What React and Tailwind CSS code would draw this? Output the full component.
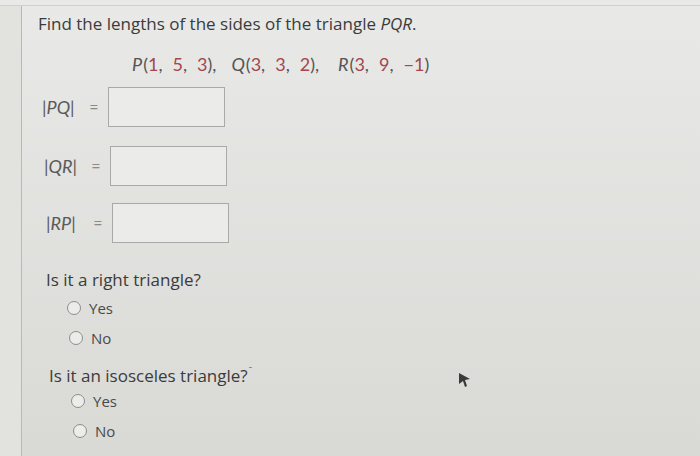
const sans = { fontFamily: '"Open Sans", "DejaVu Sans", sans-serif' };

const Num = ({ children }) => <span className="text-[#a4464f]">{children}</span>;

const Sep = () => (
  <>
    ,<span className="inline-block w-[10px]" />
  </>
);

const Point = ({ name, a, b, c, last }) => (
  <span className={`whitespace-nowrap ${last ? "ml-[4px]" : ""}`}>
    <i>{name}</i>
    <span className="ml-[1px]">(</span>
    <Num>{a}</Num>
    <Sep />
    <Num>{b}</Num>
    <Sep />
    <Num>{c}</Num>){last ? "" : ","}
  </span>
);

const Row = ({ left, label, mt }) => (
  <div className={`flex items-center h-[40px] ${left} ${mt}`}>
    <div className="w-[40px] text-[18px] text-[#5a5a5a] font-['Lato',sans-serif]">
      |<i>{label}</i>|
    </div>
    <div className="w-[24px] text-center text-[16px] text-[#8a8a8a] font-['Lato',sans-serif]">=</div>
    <div className="ml-[2px] w-[117px] h-[40px] border border-[#a9a9a7] bg-[#ebebe9]" />
  </div>
);

const Radio = ({ text, left, mt }) => (
  <div className={`flex items-center h-[24px] ${left} ${mt}`}>
    <span className="w-[14px] h-[14px] rounded-full border border-[#8d8d8b] bg-[#ececea]" />
    <span className="ml-[8px] text-[15px] text-[#4a4a4a]">{text}</span>
  </div>
);

export default function App() {
  return (
    <div
      className="relative w-[700px] h-[456px] overflow-hidden bg-gradient-to-b from-[#e9e9e7] to-[#d9d9d6] text-[#3b3b3b]"
      style={sans}
    >
      <div className="h-[5px]" />
      <div className="flex h-full border-t border-[#d0d0ce]">
        <div className="w-[21px] shrink-0 bg-[#e2e2df]" />
        <div className="flex-1 border-l border-[#b8b8b5] flex flex-col">
          <div className="mt-[6px] ml-[16px] h-[24px] leading-[24px] text-[17px]">
            Find the lengths of the sides of the triangle <i>PQR</i>.
          </div>
          <div className="mt-[16px] ml-[110px] h-[24px] leading-[24px] text-[18px] text-[#555] font-['Lato',sans-serif] flex gap-[15px]">
            <Point name="P" a="1" b="5" c="3" />
            <Point name="Q" a="3" b="3" c="2" />
            <Point name="R" a="3" b="9" c="−1" last />
          </div>
          <Row label="PQ" left="ml-[20px]" mt="mt-[11px]" />
          <Row label="QR" left="ml-[22px]" mt="mt-[19px]" />
          <Row label="RP" left="ml-[24px]" mt="mt-[17px]" />
          <div className="mt-[25px] ml-[24px] h-[24px] leading-[24px] text-[17px]">
            Is it a right triangle?
          </div>
          <Radio text="Yes" left="ml-[45px]" mt="mt-[4px]" />
          <Radio text="No" left="ml-[47px]" mt="mt-[6px]" />
          <div className="mt-[14px] ml-[27px] h-[24px] leading-[24px] text-[17px]">
            Is it an isosceles triangle?
            <span className="relative -top-[9px] ml-[1px] text-[9px] text-[#555]">ˉ</span>
          </div>
          <Radio text="Yes" left="ml-[49px]" mt="mt-[1px]" />
          <Radio text="No" left="ml-[51px]" mt="mt-[6px]" />
        </div>
      </div>
      <svg className="absolute left-[458px] top-[372px]" width="14" height="16" viewBox="0 0 14 16">
        <path d="M1 1 L12 7 L7 8 L9 14 L7 15 L5 9 L1 12 Z" fill="#3a3a3a" />
      </svg>
    </div>
  );
}
